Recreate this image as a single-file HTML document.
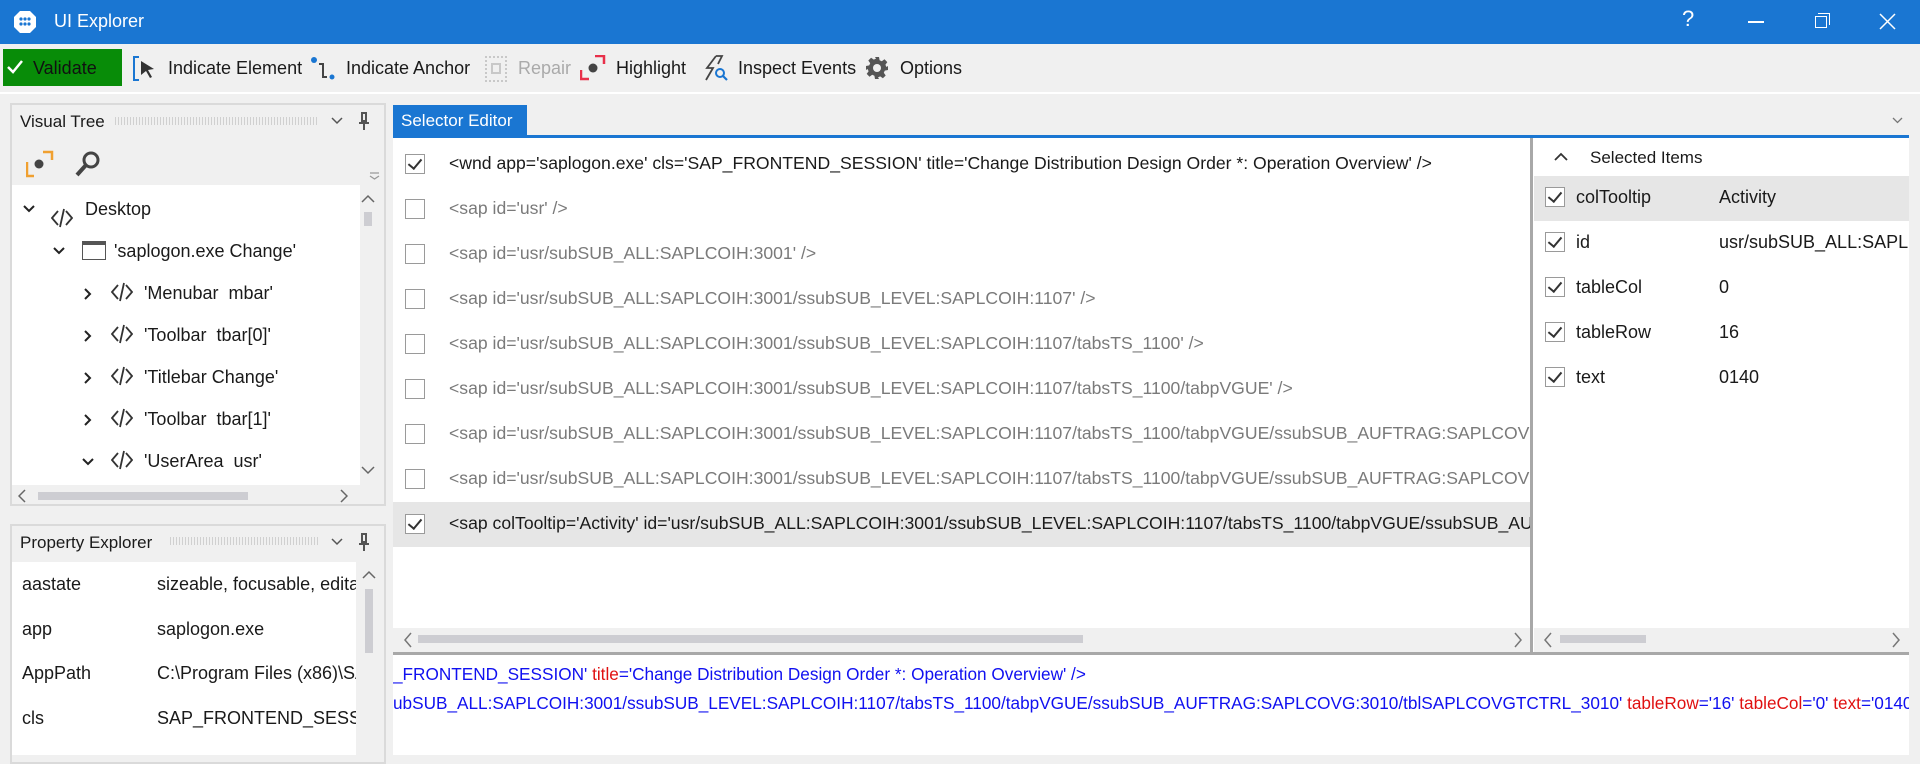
<!DOCTYPE html>
<html><head><meta charset="utf-8"><style>
*{box-sizing:border-box;margin:0;padding:0}
body{width:1920px;height:755px;overflow:hidden;background:#f0f0f0;font-family:"Liberation Sans",sans-serif;font-size:18px;color:#1a1a1a;position:relative}
.a{position:absolute;white-space:nowrap}
.cb{position:absolute;width:20px;height:20px;border:1.5px solid #9a9a9a;background:#fff}
.cb.k::after{content:"";position:absolute;left:5px;top:1px;width:6px;height:11px;border:solid #333;border-width:0 2.5px 2.5px 0;transform:rotate(40deg)}
.row{position:absolute;left:393px;width:1138px;height:45px}
.row .t{position:absolute;left:56px;top:11px;white-space:nowrap;color:#7a7a7a;font-size:17.6px}
.row .cb{left:12px;top:12px}
.sb{position:absolute;background:#cdcdd2}
.tv{position:absolute;font-size:18px;white-space:nowrap}
.ch{position:absolute}
</style></head><body>
<!-- title bar -->
<div class="a" style="left:0;top:0;width:1920px;height:44px;background:#1a76d2"></div>
<svg class="a" style="left:12px;top:9px" width="26" height="26" viewBox="0 0 26 26"><path d="M8 2h10l6 6v10l-6 6H8l-6-6V8z" fill="#fff"/><g fill="#1a76d2"><circle cx="9" cy="10" r="1.6"/><circle cx="13" cy="10" r="1.6"/><circle cx="17" cy="10" r="1.6"/><circle cx="9" cy="15" r="1.6"/><circle cx="13" cy="15" r="1.6"/><circle cx="17" cy="15" r="1.6"/></g></svg>
<div class="a" style="left:54px;top:11px;color:#fff;font-size:18px">UI Explorer</div>
<div class="a" style="left:1682px;top:6px;color:#fff;font-size:22px">?</div>
<div class="a" style="left:1748px;top:21px;width:16px;height:1.5px;background:#fff"></div>
<div class="a" style="left:1815px;top:16px;width:12px;height:12px;border:1.5px solid #fff"></div>
<div class="a" style="left:1818px;top:13px;width:12px;height:12px;border-top:1.5px solid #fff;border-right:1.5px solid #fff"></div>
<svg class="a" style="left:1879px;top:13px" width="17" height="17"><path d="M1 1L16 16M16 1L1 16" stroke="#fff" stroke-width="1.5"/></svg>
<!-- toolbar -->
<div class="a" style="left:0;top:92px;width:1920px;height:2px;background:#fff"></div>
<div class="a" style="left:3px;top:49px;width:119px;height:37px;background:#088c08"></div>
<svg class="a" style="left:6px;top:59px" width="18" height="16"><path d="M2 8l5 5L16 2" stroke="#fff" stroke-width="2.5" fill="none"/></svg>
<div class="a" style="left:33px;top:58px;color:#111">Validate</div>
<svg class="a" style="left:133px;top:56px" width="26" height="26"><path d="M6 1H1v23h5" stroke="#1a76d2" stroke-width="2" fill="none"/><path d="M8 5l13 8-6 1 4 7-2 1-4-7-5 4z" fill="#333"/></svg>
<div class="a" style="left:168px;top:58px">Indicate Element</div>
<svg class="a" style="left:310px;top:56px" width="26" height="26"><circle cx="4" cy="4" r="3" fill="#1a76d2"/><path d="M9 8h4v13h4" stroke="#444" stroke-width="2" fill="none"/><circle cx="22" cy="21" r="2.5" fill="#1a76d2"/></svg>
<div class="a" style="left:346px;top:58px">Indicate Anchor</div>
<div class="a" style="left:485px;top:56px;width:22px;height:26px;border:2px dotted #c8c8c8"></div>
<div class="a" style="left:491px;top:63px;width:10px;height:11px;border:2px solid #c8c8c8"></div>
<div class="a" style="left:518px;top:58px;color:#aaa">Repair</div>
<svg class="a" style="left:580px;top:55px" width="26" height="26"><path d="M1 15v9h8M15 1h9v8" stroke="#e8304a" stroke-width="2.5" fill="none"/><circle cx="13" cy="13" r="4.5" fill="#444"/></svg>
<div class="a" style="left:616px;top:58px">Highlight</div>
<svg class="a" style="left:704px;top:55px" width="26" height="28"><path d="M12 1L3 13h6L2 25M12 1h6l-4 8" stroke="#444" stroke-width="1.8" fill="none"/><circle cx="16" cy="18" r="4" stroke="#1a76d2" stroke-width="2" fill="none"/><path d="M19 21l4 4" stroke="#1a76d2" stroke-width="2.2"/></svg>
<div class="a" style="left:738px;top:58px">Inspect Events</div>
<svg class="a" style="left:865px;top:56px" width="24" height="24" viewBox="0 0 24 24"><path fill="#555" d="M10 1h4l.6 3.2 2.2 1 2.7-1.9 2.8 2.8-1.9 2.7 1 2.2L23 10v4l-3.2.6-1 2.2 1.9 2.7-2.8 2.8-2.7-1.9-2.2 1L14 23h-4l-.6-3.2-2.2-1-2.7 1.9-2.8-2.8 1.9-2.7-1-2.2L1 14v-4l3.2-.6 1-2.2-1.9-2.7 2.8-2.8 2.7 1.9 2.2-1z"/><circle cx="12" cy="12" r="4" fill="#f0f0f0"/></svg>
<div class="a" style="left:900px;top:58px">Options</div>

<!-- Visual tree panel -->
<div class="a" style="left:10px;top:103px;width:376px;height:403px;border:2px solid #dadada;background:#f0f0f0"></div>
<div class="a" style="left:20px;top:112px;font-size:17px">Visual Tree</div>
<div class="a" style="left:115px;top:117px;width:203px;height:8px;background:repeating-linear-gradient(90deg,#d0d0d0 0 1px,transparent 1px 3px)"></div>
<svg class="ch" style="left:331px;top:117px" width="12" height="8"><path d="M1 1l5 5 5-5" stroke="#555" stroke-width="1.5" fill="none"/></svg>
<div class="a" style="left:361px;top:112px;width:6px;height:10px;border:2px solid #555"></div>
<div class="a" style="left:359px;top:122px;width:10px;height:2px;background:#555"></div>
<div class="a" style="left:363px;top:124px;width:2px;height:6px;background:#555"></div>
<svg class="a" style="left:26px;top:150px" width="28" height="28"><path d="M1 12v14h7M17 2h9v8" stroke="#f0a030" stroke-width="2.5" fill="none"/><circle cx="13" cy="14" r="4.5" fill="#444"/></svg>
<svg class="a" style="left:74px;top:150px" width="28" height="28"><circle cx="17" cy="10" r="7" stroke="#444" stroke-width="3" fill="none"/><path d="M12 15L3 25" stroke="#444" stroke-width="4"/></svg>
<svg class="ch" style="left:369px;top:172px" width="11" height="8"><path d="M1 1h9M1 4l4.5 3 4.5-3" stroke="#999" stroke-width="1.3" fill="none"/></svg>
<div class="a" style="left:12px;top:185px;width:348px;height:300px;background:#fff"></div>
<div class="a" style="left:360px;top:185px;width:22px;height:300px;background:#f0f0f0"></div>
<div class="sb" style="left:364px;top:212px;width:8px;height:14px"></div>
<svg class="ch" style="left:361px;top:194px" width="14" height="9"><path d="M1 8l6-6 6 6" stroke="#666" stroke-width="1.5" fill="none"/></svg>
<svg class="ch" style="left:361px;top:466px" width="14" height="9"><path d="M1 1l6 6 6-6" stroke="#666" stroke-width="1.5" fill="none"/></svg>
<div class="a" style="left:12px;top:485px;width:370px;height:19px;background:#f0f0f0"></div>
<div class="sb" style="left:38px;top:492px;width:210px;height:8px"></div>
<svg class="ch" style="left:18px;top:489px" width="8" height="14"><path d="M7 1L1 7l6 6" stroke="#666" stroke-width="1.5" fill="none"/></svg>
<svg class="ch" style="left:340px;top:489px" width="8" height="14"><path d="M1 1l6 6-6 6" stroke="#666" stroke-width="1.5" fill="none"/></svg>
<!-- tree rows -->
<svg class="ch" style="left:23px;top:205px" width="12" height="8"><path d="M1 1l5 5 5-5" stroke="#222" stroke-width="2" fill="none"/></svg>
<svg class="ch" style="left:51px;top:208px" width="22" height="20"><path d="M7 3L1 10l6 7M15 3l6 7-6 7M13 1L9 19" stroke="#333" stroke-width="1.8" fill="none"/></svg>
<div class="tv" style="left:85px;top:199px">Desktop</div>
<svg class="ch" style="left:53px;top:247px" width="12" height="8"><path d="M1 1l5 5 5-5" stroke="#222" stroke-width="2" fill="none"/></svg>
<div class="a" style="left:82px;top:241px;width:24px;height:19px;border:1.5px solid #555;border-top-width:4px"></div><div class="tv" style="left:114px;top:241px">'saplogon.exe Change'</div>

<svg class="ch" style="left:84px;top:288px" width="8" height="12"><path d="M1 1l5 5-5 5" stroke="#222" stroke-width="2" fill="none"/></svg>
<svg class="ch" style="left:111px;top:282px" width="22" height="20"><path d="M7 3L1 10l6 7M15 3l6 7-6 7M13 1L9 19" stroke="#333" stroke-width="1.8" fill="none"/></svg>
<div class="tv" style="left:144px;top:283px">'Menubar&nbsp; mbar'</div>
<svg class="ch" style="left:84px;top:330px" width="8" height="12"><path d="M1 1l5 5-5 5" stroke="#222" stroke-width="2" fill="none"/></svg>
<svg class="ch" style="left:111px;top:324px" width="22" height="20"><path d="M7 3L1 10l6 7M15 3l6 7-6 7M13 1L9 19" stroke="#333" stroke-width="1.8" fill="none"/></svg>
<div class="tv" style="left:144px;top:325px">'Toolbar&nbsp; tbar[0]'</div>
<svg class="ch" style="left:84px;top:372px" width="8" height="12"><path d="M1 1l5 5-5 5" stroke="#222" stroke-width="2" fill="none"/></svg>
<svg class="ch" style="left:111px;top:366px" width="22" height="20"><path d="M7 3L1 10l6 7M15 3l6 7-6 7M13 1L9 19" stroke="#333" stroke-width="1.8" fill="none"/></svg>
<div class="tv" style="left:144px;top:367px">'Titlebar Change'</div>
<svg class="ch" style="left:84px;top:414px" width="8" height="12"><path d="M1 1l5 5-5 5" stroke="#222" stroke-width="2" fill="none"/></svg>
<svg class="ch" style="left:111px;top:408px" width="22" height="20"><path d="M7 3L1 10l6 7M15 3l6 7-6 7M13 1L9 19" stroke="#333" stroke-width="1.8" fill="none"/></svg>
<div class="tv" style="left:144px;top:409px">'Toolbar&nbsp; tbar[1]'</div>
<svg class="ch" style="left:82px;top:458px" width="12" height="8"><path d="M1 1l5 5 5-5" stroke="#222" stroke-width="2" fill="none"/></svg>
<svg class="ch" style="left:111px;top:450px" width="22" height="20"><path d="M7 3L1 10l6 7M15 3l6 7-6 7M13 1L9 19" stroke="#333" stroke-width="1.8" fill="none"/></svg>
<div class="tv" style="left:144px;top:451px">'UserArea&nbsp; usr'</div>

<!-- Property Explorer -->
<div class="a" style="left:10px;top:524px;width:376px;height:240px;border:2px solid #dadada;background:#f0f0f0"></div>
<div class="a" style="left:20px;top:533px;font-size:17px">Property Explorer</div>
<div class="a" style="left:170px;top:537px;width:148px;height:8px;background:repeating-linear-gradient(90deg,#d0d0d0 0 1px,transparent 1px 3px)"></div>
<svg class="ch" style="left:331px;top:538px" width="12" height="8"><path d="M1 1l5 5 5-5" stroke="#555" stroke-width="1.5" fill="none"/></svg>
<div class="a" style="left:361px;top:533px;width:6px;height:10px;border:2px solid #555"></div>
<div class="a" style="left:359px;top:543px;width:10px;height:2px;background:#555"></div>
<div class="a" style="left:363px;top:545px;width:2px;height:6px;background:#555"></div>
<div class="a" style="left:12px;top:562px;width:344px;height:193px;background:#fff;overflow:hidden">
<div class="a" style="left:10px;top:12px">aastate</div><div class="a" style="left:145px;top:12px">sizeable, focusable, editable</div>
<div class="a" style="left:10px;top:57px">app</div><div class="a" style="left:145px;top:57px">saplogon.exe</div>
<div class="a" style="left:10px;top:101px">AppPath</div><div class="a" style="left:145px;top:101px">C:\Program Files (x86)\SAP</div>
<div class="a" style="left:10px;top:146px">cls</div><div class="a" style="left:145px;top:146px">SAP_FRONTEND_SESSION</div>
</div>
<div class="a" style="left:356px;top:562px;width:28px;height:193px;background:#f0f0f0"></div>
<div class="sb" style="left:365px;top:589px;width:8px;height:64px"></div>
<svg class="ch" style="left:362px;top:570px" width="14" height="9"><path d="M1 8l6-6 6 6" stroke="#666" stroke-width="1.5" fill="none"/></svg>

<!-- Selector editor -->
<div class="a" style="left:393px;top:105px;width:134px;height:31px;background:#1a76d2"></div>
<div class="a" style="left:401px;top:111px;color:#fff;font-size:17px">Selector Editor</div>
<div class="a" style="left:393px;top:135px;width:1516px;height:3px;background:#1a76d2"></div>
<svg class="ch" style="left:1892px;top:117px" width="11" height="7"><path d="M1 1l4.5 4.5L10 1" stroke="#777" stroke-width="1.3" fill="none"/></svg>
<div class="a" style="left:393px;top:138px;width:1516px;height:517px;background:#fff"></div>
<div class="a" style="left:393px;top:138px;width:1138px;height:490px;overflow:hidden">
<div class="row" style="left:0;top:4px"><div class="cb k"></div><div class="t" style="color:#1a1a1a">&lt;wnd app='saplogon.exe' cls='SAP_FRONTEND_SESSION' title='Change Distribution Design Order *: Operation Overview' /&gt;</div></div>
<div class="row" style="left:0;top:49px"><div class="cb"></div><div class="t">&lt;sap id='usr' /&gt;</div></div>
<div class="row" style="left:0;top:94px"><div class="cb"></div><div class="t">&lt;sap id='usr/subSUB_ALL:SAPLCOIH:3001' /&gt;</div></div>
<div class="row" style="left:0;top:139px"><div class="cb"></div><div class="t">&lt;sap id='usr/subSUB_ALL:SAPLCOIH:3001/ssubSUB_LEVEL:SAPLCOIH:1107' /&gt;</div></div>
<div class="row" style="left:0;top:184px"><div class="cb"></div><div class="t">&lt;sap id='usr/subSUB_ALL:SAPLCOIH:3001/ssubSUB_LEVEL:SAPLCOIH:1107/tabsTS_1100' /&gt;</div></div>
<div class="row" style="left:0;top:229px"><div class="cb"></div><div class="t">&lt;sap id='usr/subSUB_ALL:SAPLCOIH:3001/ssubSUB_LEVEL:SAPLCOIH:1107/tabsTS_1100/tabpVGUE' /&gt;</div></div>
<div class="row" style="left:0;top:274px"><div class="cb"></div><div class="t">&lt;sap id='usr/subSUB_ALL:SAPLCOIH:3001/ssubSUB_LEVEL:SAPLCOIH:1107/tabsTS_1100/tabpVGUE/ssubSUB_AUFTRAG:SAPLCOVG:3010' /&gt;</div></div>
<div class="row" style="left:0;top:319px"><div class="cb"></div><div class="t">&lt;sap id='usr/subSUB_ALL:SAPLCOIH:3001/ssubSUB_LEVEL:SAPLCOIH:1107/tabsTS_1100/tabpVGUE/ssubSUB_AUFTRAG:SAPLCOVG:3010/tbl' /&gt;</div></div>
<div class="row" style="left:0;top:364px;background:#e6e6e6"><div class="cb k"></div><div class="t" style="color:#1a1a1a">&lt;sap colTooltip='Activity' id='usr/subSUB_ALL:SAPLCOIH:3001/ssubSUB_LEVEL:SAPLCOIH:1107/tabsTS_1100/tabpVGUE/ssubSUB_AUFTRAG:SAPLCOVG' /&gt;</div></div>
</div>
<div class="a" style="left:393px;top:628px;width:1138px;height:24px;background:#f0f0f0"></div>
<div class="sb" style="left:418px;top:635px;width:665px;height:8px"></div>
<svg class="ch" style="left:404px;top:632px" width="8" height="16"><path d="M7 1L1 8l6 7" stroke="#777" stroke-width="1.5" fill="none"/></svg>
<svg class="ch" style="left:1514px;top:632px" width="8" height="16"><path d="M1 1l6 7-6 7" stroke="#777" stroke-width="1.5" fill="none"/></svg>
<div class="a" style="left:1530px;top:138px;width:3px;height:517px;background:#a8a8a8"></div>
<!-- right panel -->
<svg class="ch" style="left:1554px;top:152px" width="14" height="9"><path d="M1 8l6-6 6 6" stroke="#333" stroke-width="1.8" fill="none"/></svg>
<div class="a" style="left:1590px;top:148px;font-size:17px">Selected Items</div>
<div class="a" style="left:1534px;top:176px;width:375px;height:45px;background:#e6e6e6"></div>
<div class="cb k" style="left:1545px;top:187px"></div><div class="a" style="left:1576px;top:187px">colTooltip</div><div class="a" style="left:1719px;top:187px">Activity</div>
<div class="cb k" style="left:1545px;top:232px"></div><div class="a" style="left:1576px;top:232px">id</div><div class="a" style="left:1719px;top:232px;width:190px;overflow:hidden">usr/subSUB_ALL:SAPLCOIH</div>
<div class="cb k" style="left:1545px;top:277px"></div><div class="a" style="left:1576px;top:277px">tableCol</div><div class="a" style="left:1719px;top:277px">0</div>
<div class="cb k" style="left:1545px;top:322px"></div><div class="a" style="left:1576px;top:322px">tableRow</div><div class="a" style="left:1719px;top:322px">16</div>
<div class="cb k" style="left:1545px;top:367px"></div><div class="a" style="left:1576px;top:367px">text</div><div class="a" style="left:1719px;top:367px">0140</div>
<div class="a" style="left:1534px;top:628px;width:375px;height:24px;background:#f0f0f0"></div>
<div class="sb" style="left:1560px;top:635px;width:86px;height:8px"></div>
<svg class="ch" style="left:1544px;top:632px" width="8" height="16"><path d="M7 1L1 8l6 7" stroke="#777" stroke-width="1.5" fill="none"/></svg>
<svg class="ch" style="left:1892px;top:632px" width="8" height="16"><path d="M1 1l6 7-6 7" stroke="#777" stroke-width="1.5" fill="none"/></svg>
<div class="a" style="left:1909px;top:138px;width:11px;height:617px;background:#f0f0f0"></div>
<!-- bottom text -->
<div class="a" style="left:393px;top:652px;width:1516px;height:3px;background:#a8a8a8"></div>
<div class="a" style="left:393px;top:655px;width:1516px;height:100px;background:#fff;overflow:hidden;color:#1010f0;font-size:17.2px">
<div class="a" style="left:0;top:9px">_FRONTEND_SESSION' <span style="color:#e01010">title</span>='Change Distribution Design Order *: Operation Overview' /&gt;</div>
<div class="a" style="left:0;top:38px">ubSUB_ALL:SAPLCOIH:3001/ssubSUB_LEVEL:SAPLCOIH:1107/tabsTS_1100/tabpVGUE/ssubSUB_AUFTRAG:SAPLCOVG:3010/tblSAPLCOVGTCTRL_3010' <span style="color:#e01010">tableRow</span>='16' <span style="color:#e01010">tableCol</span>='0' <span style="color:#e01010">text</span>='0140' /&gt;</div>
</div>
</body></html>
